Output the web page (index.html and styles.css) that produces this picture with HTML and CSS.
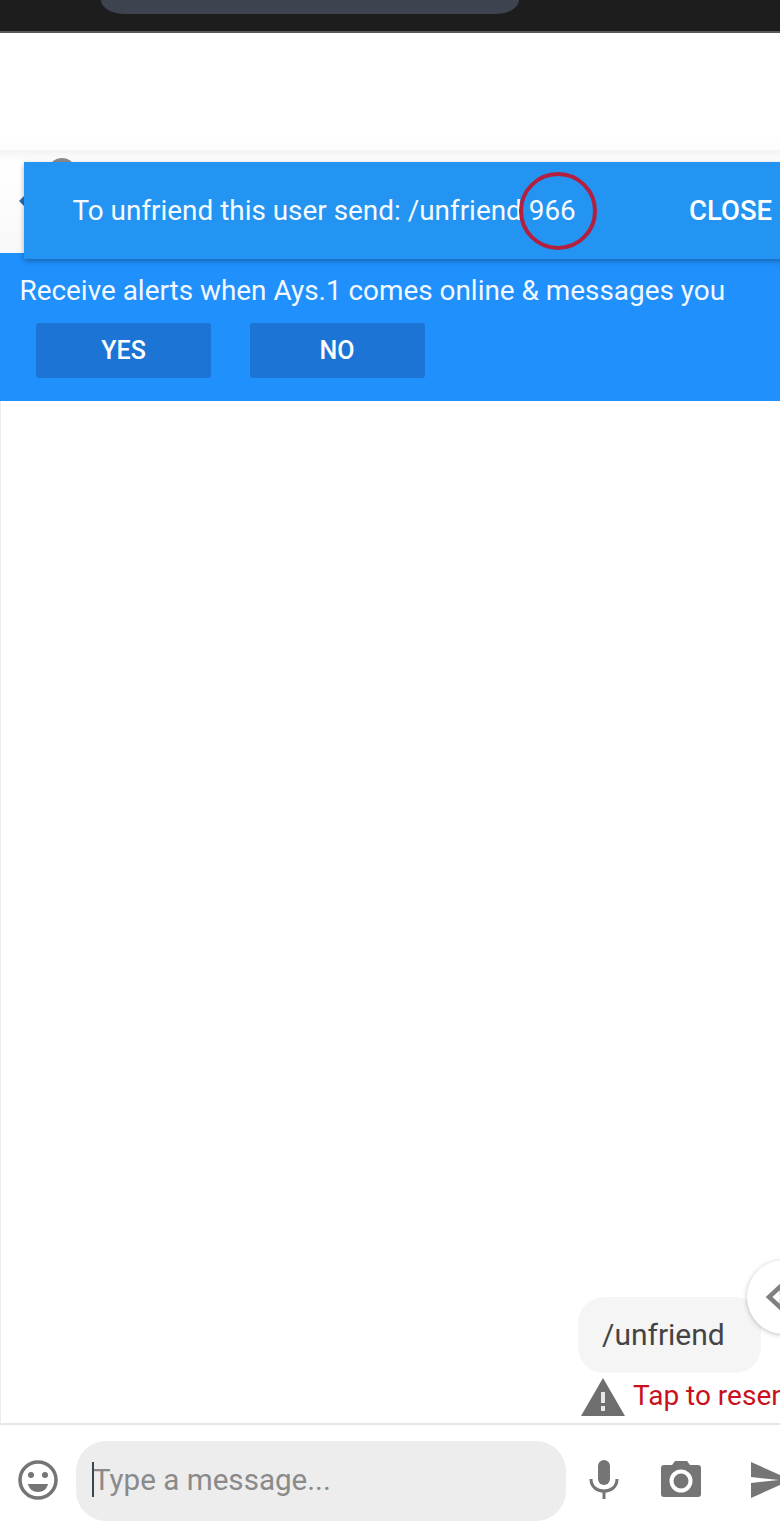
FILE: index.html
```html
<!DOCTYPE html>
<html lang="en">
<head>
<meta charset="utf-8">
<title>Chat</title>
<link rel="stylesheet" href="styles.css">
</head>
<body>
<div class="phone">
  <div class="statusbar"><div class="notch"></div></div>
  <div class="spacer"></div>
  <div class="chat-header">
    <svg class="back" width="10" height="16" viewBox="0 0 10 16"><path d="M8 0 0 8l8 8z" fill="#2b6cb0"/></svg>
    <div class="avatar"></div>
  </div>
  <div class="alerts">
    <p class="alerts-text">Receive alerts when Ays.1 comes online &amp; messages you</p>
    <div class="alerts-actions">
      <button class="alert-btn">YES</button>
      <button class="alert-btn">NO</button>
    </div>
  </div>
  <main class="messages">
    <div class="bubble-row">
      <div class="bubble">/unfriend</div>
      <div class="reply">
        <svg width="40" height="40" viewBox="0 0 40 40"><path d="M18 8 5 20l13 12v-8h20v-8H18z" fill="none" stroke="#808080" stroke-width="4.500"/></svg>
      </div>
    </div>
    <div class="failed">
      <svg class="warn" width="44" height="38" viewBox="0 0 44 38"><path d="M22 0 44 38H0z" fill="#6e6e6e"/><rect x="20" y="14" width="4" height="11" fill="#e8e8e8"/><rect x="20" y="28" width="4" height="5" fill="#e8e8e8"/></svg>
      <span class="failed-text">Tap to resend</span>
    </div>
  </main>
  <footer class="composer">
    <svg class="emoji" width="40" height="40" viewBox="0 0 40 40"><circle cx="20" cy="20" r="18" fill="none" stroke="#757575" stroke-width="3.500"/><circle cx="13" cy="15" r="3" fill="#757575"/><circle cx="27" cy="15" r="3" fill="#757575"/><path d="M10 24h20c-1 5-5 8-10 8s-9-3-10-8z" fill="#757575"/></svg>
    <div class="input"><span class="caret"></span><span class="placeholder">Type a message...</span></div>
    <svg class="mic" width="30" height="40" viewBox="0 0 30 40"><rect x="9" y="0" width="12" height="25" rx="6" fill="#757575"/><path d="M2 19c0 8 6 12 13 12s13-4 13-12" fill="none" stroke="#757575" stroke-width="3"/><rect x="13.500" y="30" width="3" height="9" fill="#757575"/></svg>
    <svg class="camera" width="40" height="36" viewBox="0 0 40 36"><path d="M3 4h8l3-4h12l3 4h8a3 3 0 0 1 3 3v26a3 3 0 0 1-3 3H3a3 3 0 0 1-3-3V7a3 3 0 0 1 3-3z" fill="#757575"/><circle cx="20" cy="20" r="9.500" fill="none" stroke="#fff" stroke-width="4"/></svg>
    <svg class="send" width="40" height="36" viewBox="0 0 40 36"><path d="M0 0 40 18 0 36V21l28-3L0 15z" fill="#757575"/></svg>
  </footer>
  <div class="snackbar">
    <span class="snack-text">To unfriend this user send: /unfriend 966</span>
    <span class="snack-close">CLOSE</span>
  </div>
  <div class="ring"></div>
</div>
</body>
</html>
```
FILE: styles.css
```css
* { box-sizing: border-box; }
html, body { margin: 0; padding: 0; }
body { width: 780px; height: 1536px; overflow: hidden; background: #fff; font-family: Roboto, "Liberation Sans", sans-serif; }
.phone { position: relative; width: 780px; height: 1536px; overflow: hidden; display: flex; flex-direction: column; }
.statusbar { flex: none; height: 33px; background: #1d1d1d; border-bottom: 2px solid #5a5a5a; }
.notch { width: 418px; height: 14px; margin-left: 101px; background: #3d4450; border-radius: 0 0 24px 24px / 0 0 14px 14px; }
.spacer { flex: none; height: 117px; background: linear-gradient(#fff 85%, #fcfcfc); }
.chat-header { flex: none; height: 103px; background: linear-gradient(#f3f3f3, #fff 12%, #f8f8f8); position: relative; display: flex; }
.back { position: absolute; left: 19px; top: 43px; }
.avatar { position: absolute; left: 48px; top: 8px; width: 28px; height: 28px; border-radius: 50%; background: #8c8c8c; }
.alerts { flex: none; height: 148px; background: #2090fc; padding: 20px 0 0 19.500px; color: #fff; }
.alerts-text { margin: 0; font-size: 27.900px; line-height: 35px; white-space: nowrap; color: #f2f8ff; }
.alerts-actions { display: flex; gap: 38.500px; margin: 15px 0 0 16.500px; }
.alert-btn { width: 175px; height: 55px; border: 0; border-radius: 3px; background: #1c75d5; color: #fff; font: 500 25px Roboto, sans-serif; padding: 0; }
.messages { flex: 1; min-height: 0; display: flex; flex-direction: column; justify-content: flex-end; align-items: flex-end; border-left: 1px solid #ececec; border-bottom: 2px solid #e6e6e6; background: #fff; }
.bubble-row { position: relative; margin-right: 19px; }
.bubble { width: 183px; height: 76px; border-radius: 26px; background: #f5f5f5; color: #444; font-size: 30px; line-height: 76px; padding-left: 24px; white-space: nowrap; }
.reply { position: absolute; left: 169px; top: -37px; width: 74px; height: 74px; border-radius: 50%; background: #fff; box-shadow: 0 1px 5px rgba(0,0,0,.25); padding: 17px 0 0 17px; }
.reply svg { display: block; }
.failed { display: flex; align-items: flex-start; align-self: flex-start; margin-left: 580px; width: 200px; height: 50px; padding-top: 5px; white-space: nowrap; }
.warn { flex: none; margin-top: 0; }
.failed-text { margin-left: 8px; font-size: 28px; line-height: 36px; color: #c9111e; }
.composer { flex: none; height: 111px; display: flex; align-items: flex-start; padding: 0 0 0 18px; background: #fff; overflow: hidden; }
.emoji { flex: none; margin: 35px 0 0 0; }
.input { flex: none; position: relative; width: 490px; height: 80px; margin: 16px 0 0 18px; border-radius: 30px; background: #ededed; padding: 0 0 3px 17px; display: flex; align-items: center; }
.caret { position: absolute; left: 16px; top: 21px; width: 1.500px; height: 35px; background: #33475b; }
.placeholder { font-size: 29.600px; color: #8a8a8a; }
.mic { flex: none; margin: 35px 0 0 23px; }
.camera { flex: none; margin: 36px 0 0 42px; }
.send { flex: none; margin: 37px 0 0 50px; }
.snackbar { position: absolute; left: 24px; top: 162px; width: 790px; height: 97px; background: #2394f1; color: #fff; display: flex; align-items: center; box-shadow: 0 2px 5px rgba(0,0,0,.3); padding: 0 0 1px 48.500px; white-space: nowrap; }
.snack-text { font-size: 27.900px; color: #f4faff; }
.snack-close { position: absolute; left: 665px; font-size: 27.500px; font-weight: 500; }
.ring { position: absolute; left: 519px; top: 172px; width: 78px; height: 78px; border: 4px solid #b3203f; border-radius: 50%; }
```
